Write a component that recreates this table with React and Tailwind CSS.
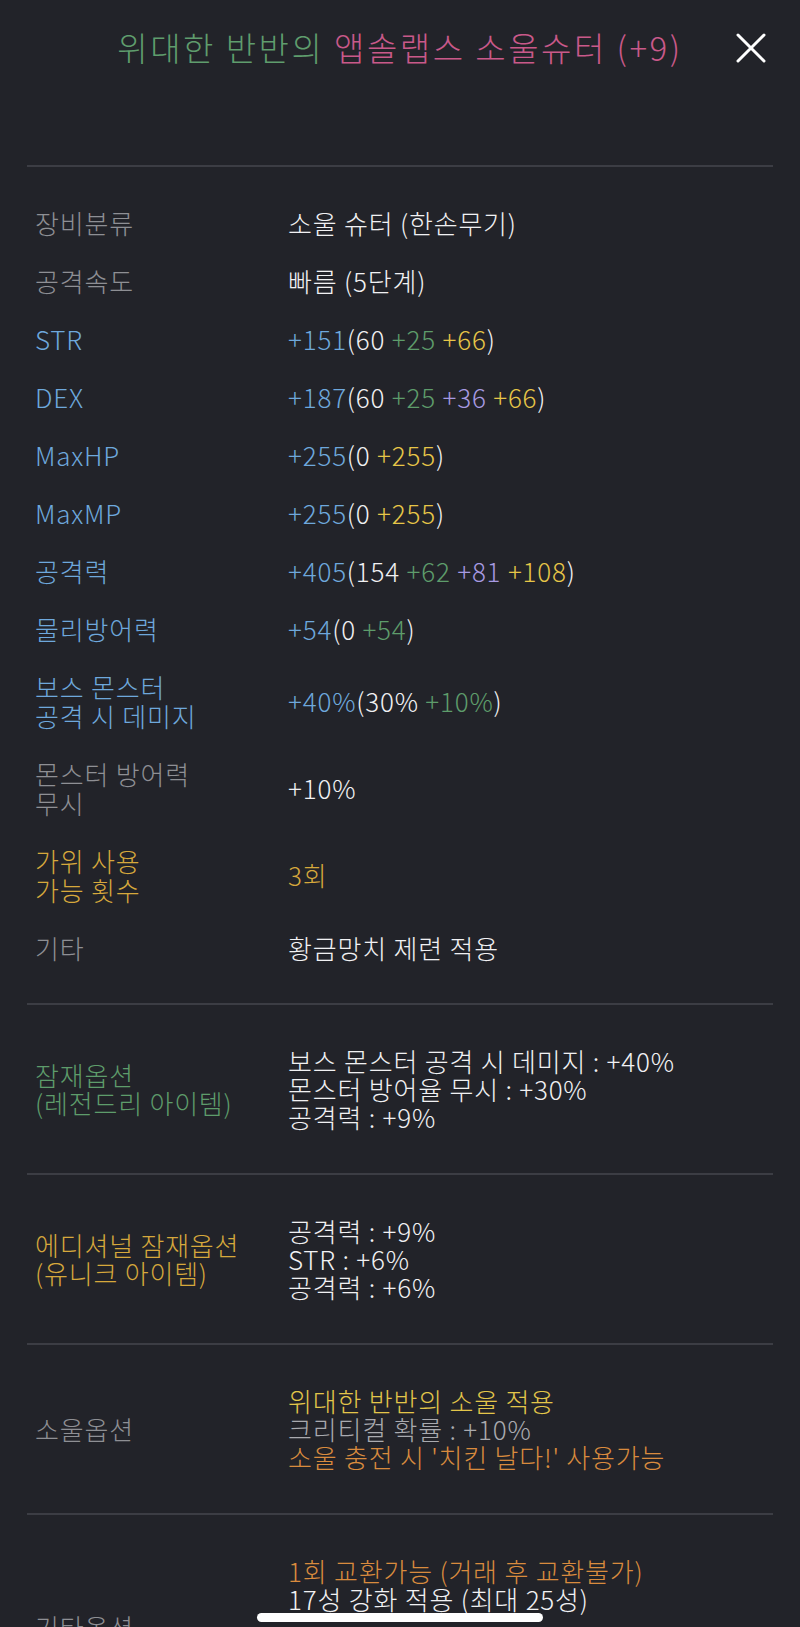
import React from "react";

const C = {
  blue: "text-[#6ea8dc]",
  green: "text-[#5e9c6b]",
  purple: "text-[#a79ae2]",
  yellow: "text-[#e7c648]",
  white: "text-[#f1f1f3]",
  gray: "text-[#8e8f94]",
  gold: "text-[#d6a83c]",
  orange: "text-[#d98b3e]",
};

// 기본 정보 행
const stats = [
  { label: ["장비분류"], lc: C.gray, value: [[C.white, "소울 슈터 (한손무기)"]] },
  { label: ["공격속도"], lc: C.gray, value: [[C.white, "빠름 (5단계)"]] },
  {
    label: ["STR"],
    lc: C.blue,
    value: [[C.blue, "+151"], [C.white, "(60 "], [C.green, "+25 "], [C.yellow, "+66"], [C.white, ")"]],
  },
  {
    label: ["DEX"],
    lc: C.blue,
    value: [[C.blue, "+187"], [C.white, "(60 "], [C.green, "+25 "], [C.purple, "+36 "], [C.yellow, "+66"], [C.white, ")"]],
  },
  {
    label: ["MaxHP"],
    lc: C.blue,
    value: [[C.blue, "+255"], [C.white, "(0 "], [C.yellow, "+255"], [C.white, ")"]],
  },
  {
    label: ["MaxMP"],
    lc: C.blue,
    value: [[C.blue, "+255"], [C.white, "(0 "], [C.yellow, "+255"], [C.white, ")"]],
  },
  {
    label: ["공격력"],
    lc: C.blue,
    value: [[C.blue, "+405"], [C.white, "(154 "], [C.green, "+62 "], [C.purple, "+81 "], [C.yellow, "+108"], [C.white, ")"]],
  },
  {
    label: ["물리방어력"],
    lc: C.blue,
    value: [[C.blue, "+54"], [C.white, "(0 "], [C.green, "+54"], [C.white, ")"]],
  },
  {
    label: ["보스 몬스터", "공격 시 데미지"],
    lc: C.blue,
    value: [[C.blue, "+40%"], [C.white, "(30% "], [C.green, "+10%"], [C.white, ")"]],
  },
  { label: ["몬스터 방어력", "무시"], lc: C.gray, value: [[C.white, "+10%"]] },
  { label: ["가위 사용", "가능 횟수"], lc: C.gold, value: [[C.gold, "3회"]] },
  { label: ["기타"], lc: C.gray, value: [[C.white, "황금망치 제련 적용"]] },
];

const options = [
  {
    label: ["잠재옵션", "(레전드리 아이템)"],
    lc: C.green,
    lines: [
      [C.white, "보스 몬스터 공격 시 데미지 : +40%"],
      [C.white, "몬스터 방어율 무시 : +30%"],
      [C.white, "공격력 : +9%"],
    ],
  },
  {
    label: ["에디셔널 잠재옵션", "(유니크 아이템)"],
    lc: C.gold,
    lines: [
      [C.white, "공격력 : +9%"],
      [C.white, "STR : +6%"],
      [C.white, "공격력 : +6%"],
    ],
  },
  {
    label: ["소울옵션"],
    lc: C.gray,
    lines: [
      ["text-[#e3c64a]", "위대한 반반의 소울 적용"],
      ["text-[#a9aaaf]", "크리티컬 확률 : +10%"],
      [C.orange, "소울 충전 시 '치킨 날다!' 사용가능"],
    ],
  },
  {
    label: ["기타옵션"],
    lc: C.gray,
    lines: [
      [C.orange, "1회 교환가능 (거래 후 교환불가)"],
      [C.white, "17성 강화 적용 (최대 25성)"],
      [C.white, "\u00a0"],
      [C.white, "업그레이드 가능 횟수 : 0"],
      [C.white, "황금망치 제련 적용"],
    ],
  },
];

function CloseIcon() {
  return (
    <svg width="30" height="30" viewBox="0 0 30 30" fill="none">
      <path d="M2 2 L28 28 M28 2 L2 28" stroke="#ffffff" strokeWidth="3" strokeLinecap="round" />
    </svg>
  );
}

function Label({ lines, color }) {
  return (
    <div className={`flex flex-col ${color}`}>
      {lines.map((l, i) => (
        <span key={i}>{l}</span>
      ))}
    </div>
  );
}

export default function App() {
  return (
    <div className="relative w-[800px] h-[1627px] overflow-hidden bg-[#222329] font-['Noto_Sans_CJK_KR','Noto_Sans',sans-serif] font-light">
      {/* 헤더 */}
      <div className="relative flex justify-center pt-[25px] h-[165px]">
        <h1 className="text-[33px] leading-[44px] font-light tracking-[2.5px]">
          <span className="text-[#5f9d6d]">위대한 반반의 </span>
          <span className="text-[#c9598a]">앱솔랩스 소울슈터 (+9)</span>
        </h1>
        <button className="absolute right-[34px] top-[33px]">
          <CloseIcon />
        </button>
      </div>

      <div className="mx-[27px]">
        {/* 기본 정보 */}
        <div className="border-t-2 border-[#3c3d44] pt-[26px] pb-[27px] pl-[8px] text-[26px] leading-[29px] tracking-[0.8px]">
          {stats.map((s, i) => (
            <div key={i} className="grid grid-cols-[253px_1fr] items-center py-[14.5px]">
              <Label lines={s.label} color={s.lc} />
              <div>
                {s.value.map(([c, t], j) => (
                  <span key={j} className={c}>
                    {t}
                  </span>
                ))}
              </div>
            </div>
          ))}
        </div>

        {/* 옵션 */}
        {options.map((o, i) => (
          <div
            key={i}
            className="grid grid-cols-[253px_1fr] items-center border-t-2 border-[#3c3d44] py-[42px] pl-[8px] text-[26px] leading-[28px] tracking-[0.8px]"
          >
            <Label lines={o.label} color={o.lc} />
            <div className="flex flex-col">
              {o.lines.map(([c, t], j) => (
                <span key={j} className={c}>
                  {t}
                </span>
              ))}
            </div>
          </div>
        ))}
      </div>

      {/* 홈 인디케이터 */}
      <div className="absolute bottom-[5px] left-[257px] w-[286px] h-[9px] rounded-full bg-white" />
    </div>
  );
}
